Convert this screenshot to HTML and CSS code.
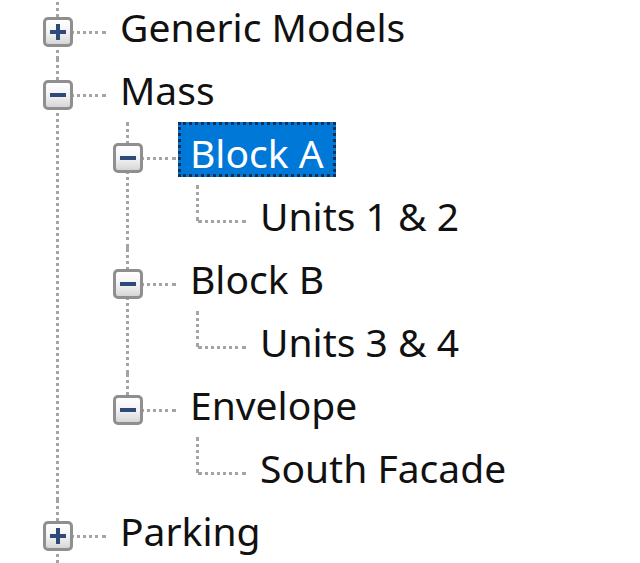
FILE: index.html
```html
<!DOCTYPE html>
<html lang="en">
<head>
    <meta charset="UTF-8">
    <title>Tree</title>
    <link rel="stylesheet" href="styles.css">
</head>
<body>
<ul class="tree">
    <li class="node">
        <div class="row"><span class="twisty"><span class="btn plus"></span></span><span class="label">Generic Models</span></div>
    </li>
    <li class="node">
        <div class="row"><span class="twisty"><span class="btn"></span></span><span class="label">Mass</span></div>
        <ul class="group">
            <li class="node">
                <div class="row"><span class="twisty"><span class="btn"></span></span><span class="label selected">Block A</span></div>
                <ul class="group">
                    <li class="node leaf">
                        <div class="row"><span class="twisty"></span><span class="label">Units 1 &amp; 2</span></div>
                    </li>
                </ul>
            </li>
            <li class="node">
                <div class="row"><span class="twisty"><span class="btn"></span></span><span class="label">Block B</span></div>
                <ul class="group">
                    <li class="node leaf">
                        <div class="row"><span class="twisty"></span><span class="label">Units 3 &amp; 4</span></div>
                    </li>
                </ul>
            </li>
            <li class="node">
                <div class="row"><span class="twisty"><span class="btn"></span></span><span class="label">Envelope</span></div>
                <ul class="group">
                    <li class="node leaf">
                        <div class="row"><span class="twisty"></span><span class="label">South Facade</span></div>
                    </li>
                </ul>
            </li>
        </ul>
    </li>
    <li class="node">
        <div class="row"><span class="twisty"><span class="btn plus"></span></span><span class="label">Parking</span></div>
    </li>
</ul>
</body>
</html>
```

FILE: styles.css
```css
* {
    margin: 0;
    padding: 0;
    box-sizing: border-box;
}
body {
    background: #fff;
    font-family: "Noto Sans", "Open Sans", sans-serif;
    font-size: 39px;
    color: #111;
    overflow: hidden;
}
ul {
    list-style: none;
}
.tree {
    margin-top: -4px;
}
.group {
    padding-left: 70px;
}
.node {
    position: relative;
}
/* vertical guide at the item's own button column */
.node::before {
    content: "";
    position: absolute;
    left: 56px;
    top: 0;
    bottom: 0;
    border-left: 3px dotted #a4a4a4;
}
.group > .node:last-child::before {
    bottom: auto;
    height: 21px;
}
.group > .leaf:last-child::before {
    height: 36px;
}
.row {
    display: flex;
    align-items: flex-start;
    height: 63px;
}
.twisty {
    position: relative;
    flex: none;
    width: 108px;
    height: 63px;
}
.twisty::before {
    content: "";
    position: absolute;
    left: 58px;
    right: 2px;
    top: 35px;
    border-top: 3px dotted #a4a4a4;
}
.btn {
    position: relative;
    display: block;
    width: 30px;
    height: 30px;
    margin: 21px 0 0 43px;
    border: 3px solid #8f8f8f;
    border-radius: 5px;
    background: linear-gradient(#ffffff, #f3f3f3 50%, #d6d6d6);
}
.btn::before {
    content: "";
    position: absolute;
    left: 4px;
    right: 4px;
    top: 10px;
    height: 4px;
    background: #2e4a78;
}
.btn.plus::after {
    content: "";
    position: absolute;
    top: 4px;
    bottom: 4px;
    left: 10px;
    width: 4px;
    background: #2e4a78;
}
.label {
    height: 55px;
    padding: 6px 9px 0;
    line-height: 43px;
    border: 3px solid transparent;
    white-space: nowrap;
}
.label.selected {
    background: #0078d7;
    color: #fff;
    border: 3px dotted #143055;
}
```
